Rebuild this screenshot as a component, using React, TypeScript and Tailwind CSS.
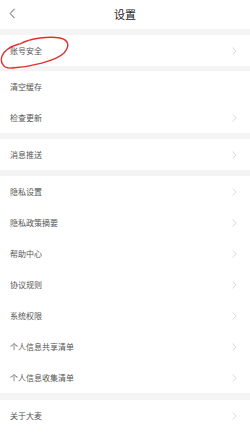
import React from "react";

const Chevron = () => (
  <svg width="5" height="8" viewBox="0 0 5 8" className="shrink-0">
    <path d="M0.6 0.6 L4.2 4 L0.6 7.4" fill="none" stroke="#cfcfcf" strokeWidth="0.8" />
  </svg>
);

const Row = ({ label }: { label: string }) => (
  <div className="flex h-[31px] items-center justify-between bg-white pl-[10px] pr-[13px]">
    <span className="text-[8px] leading-none text-[#555]">{label}</span>
    <Chevron />
  </div>
);

export default function App() {
  return (
    <div
      className="relative h-[439px] w-[250px] overflow-hidden bg-white"
      style={{ fontFamily: '"Noto Sans CJK SC", "Noto Sans", sans-serif' }}
    >
      <div className="relative flex h-[29px] items-center justify-center bg-white">
        <svg width="7" height="11" viewBox="0 0 7 11" className="absolute left-[9px] top-[8px]">
          <path d="M5.5 0.8 L1.2 5.5 L5.5 10.2" fill="none" stroke="#444" strokeWidth="0.9" />
        </svg>
        <span className="text-[11px] leading-none text-[#222]">设置</span>
      </div>
      <div className="h-[6px] bg-[#f4f4f4]" />
      <Row label="账号安全" />
      <div className="h-[5px] bg-[#f4f4f4]" />
      <div className="flex h-[31px] items-center bg-white pl-[10px]">
        <span className="text-[8px] leading-none text-[#555]">清空缓存</span>
      </div>
      <Row label="检查更新" />
      <div className="h-[6px] bg-[#f4f4f4]" />
      <Row label="消息推送" />
      <div className="h-[6px] bg-[#f4f4f4]" />
      <Row label="隐私设置" />
      <Row label="隐私政策摘要" />
      <Row label="帮助中心" />
      <Row label="协议规则" />
      <Row label="系统权限" />
      <Row label="个人信息共享清单" />
      <Row label="个人信息收集清单" />
      <div className="h-[7px] bg-[#f4f4f4]" />
      <Row label="关于大麦" />
      <svg
        width="72"
        height="38"
        viewBox="0 0 72 38"
        className="pointer-events-none absolute left-0 top-[34px]"
      >
        <path
          d="M20 10 C30 4, 50 2, 60 4 C69 6, 70 12, 64 19 C56 27, 30 33, 12 34 C3 35, 0 28, 2 22 C5 15, 12 12, 19 10"
          fill="none"
          stroke="#e0302e"
          strokeWidth="1.4"
          strokeLinecap="round"
        />
      </svg>
    </div>
  );
}
